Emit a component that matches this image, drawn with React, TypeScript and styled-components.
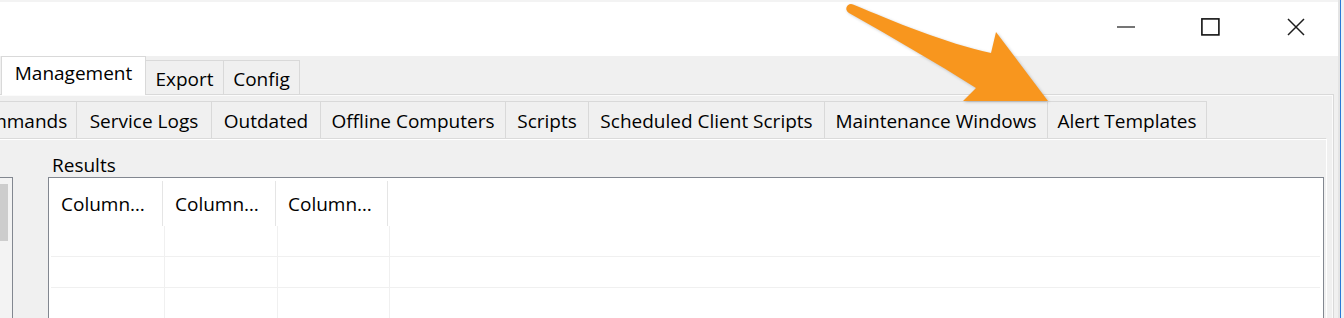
import React from 'react';
import styled, { createGlobalStyle } from 'styled-components';

const GlobalStyle = createGlobalStyle`
  html, body {
    margin: 0;
    padding: 0;
    background: #ffffff;
    overflow: hidden;
  }
  body {
    font-family: "Open Sans", "Noto Sans", "Liberation Sans", sans-serif;
    font-size: 19px;
    color: #000;
  }
`;

const topTabs = [
  { label: 'Management', width: 145, selected: true },
  { label: 'Export', width: 79 },
  { label: 'Config', width: 77 },
];

const subTabs = [
  { label: 'Commands', width: 120 },
  { label: 'Service Logs', width: 135 },
  { label: 'Outdated', width: 109 },
  { label: 'Offline Computers', width: 185 },
  { label: 'Scripts', width: 83 },
  { label: 'Scheduled Client Scripts', width: 236 },
  { label: 'Maintenance Windows', width: 223 },
  { label: 'Alert Templates', width: 160 },
];

const columns = [114, 113, 112];
const rows = [0, 1, 2];

const App = () => {
  return (
    <>
      <GlobalStyle />
      <Screen>
        <Window>
          <TitleBar>
            <CaptionButton aria-label="Minimize">
              <svg width="18" height="2" viewBox="0 0 18 2">
                <line x1="0" y1="1" x2="18" y2="1" stroke="#2b2b2b" strokeWidth="1.3" />
              </svg>
            </CaptionButton>
            <CaptionButton aria-label="Maximize">
              <svg width="19" height="18" viewBox="0 0 19 18">
                <rect x="0.9" y="0.9" width="17" height="16" fill="none" stroke="#111" strokeWidth="1.6" />
              </svg>
            </CaptionButton>
            <CaptionButton aria-label="Close">
              <svg width="18" height="18" viewBox="0 0 18 18">
                <path d="M1 1 L17 17 M17 1 L1 17" stroke="#1d1d1d" strokeWidth="1.5" />
              </svg>
            </CaptionButton>
          </TitleBar>

          <Body>
            <TopTabStrip>
              {topTabs.map((t) => (
                <TopTab key={t.label} $w={t.width} $selected={!!t.selected}>
                  {t.label}
                </TopTab>
              ))}
            </TopTabStrip>

            <OuterPanel>
              <SubTabStrip>
                {subTabs.map((t) => (
                  <SubTab key={t.label} $w={t.width}>
                    {t.label}
                  </SubTab>
                ))}
              </SubTabStrip>

              <InnerPanel>
                <Spacer />
                <GroupLabel>Results</GroupLabel>
                <LeftPane>
                  <ScrollThumb />
                </LeftPane>
                <ListBox>
                  <HeaderRow>
                    {columns.map((w, i) => (
                      <HeaderCell key={i} $w={w}>
                        Column…
                      </HeaderCell>
                    ))}
                  </HeaderRow>
                  <RowArea>
                    {rows.map((r) => (
                      <GridRow key={r}>
                        {columns.map((w, i) => (
                          <GridCell key={i} $w={w} />
                        ))}
                        <FillCell />
                      </GridRow>
                    ))}
                  </RowArea>
                </ListBox>
              </InnerPanel>
            </OuterPanel>
          </Body>
        </Window>
        <NextWindowEdge />

        <ArrowOverlay>
          <svg width="220" height="110" viewBox="840 0 220 110">
            <path
              d="M853 4.5 C895 22 945 43 991 53 L996 32 L1048 101 L963 101 L976 88 C935 62 893 38 849 13 A4.6 4.6 0 0 1 853 4.5 Z"
              fill="#f8961e"
            />
          </svg>
        </ArrowOverlay>
      </Screen>
    </>
  );
};

export default App;

const Screen = styled.div`
  position: relative;
  display: flex;
  width: 1344px;
  height: 318px;
  overflow: hidden;
`;

const Window = styled.div`
  width: 1338px;
  display: flex;
  flex-direction: column;
  flex-shrink: 0;
`;

const TitleBar = styled.div`
  height: 56px;
  flex-shrink: 0;
  box-sizing: border-box;
  border-top: 2px solid #f3f3f3;
  background: #ffffff;
  display: flex;
  justify-content: flex-end;
  align-items: flex-start;
`;

const CaptionButton = styled.div`
  width: 85px;
  height: 50px;
  display: flex;
  align-items: center;
  justify-content: center;
`;

const Body = styled.div`
  flex: 1 0 auto;
  background: #f0f0f0;
  display: flex;
  flex-direction: column;
`;

const TopTabStrip = styled.div`
  height: 38px;
  flex-shrink: 0;
  display: flex;
  align-items: flex-end;
  padding-left: 1px;
`;

const TopTab = styled.div<{ $w: number; $selected: boolean }>`
  position: relative;
  z-index: 1;
  box-sizing: border-box;
  width: ${(p) => p.$w}px;
  height: ${(p) => (p.$selected ? 39 : 34)}px;
  margin-bottom: ${(p) => (p.$selected ? -1 : 0)}px;
  margin-left: ${(p) => (p.$selected ? 0 : -1)}px;
  padding-top: ${(p) => (p.$selected ? 4 : 6)}px;
  background: ${(p) => (p.$selected ? '#ffffff' : '#f0f0f0')};
  border: 1px solid #d9d9d9;
  border-bottom: none;
  text-align: center;
  line-height: 25px;
  white-space: nowrap;
`;

const OuterPanel = styled.div`
  flex: 1 0 auto;
  margin-right: 4px;
  border-top: 1px solid #d9d9d9;
  border-right: 1px solid #d9d9d9;
  box-shadow: inset 0 1px 0 #fbfbfb, inset -1px 0 0 #fbfbfb;
  padding-top: 6px;
  display: flex;
  flex-direction: column;
`;

const SubTabStrip = styled.div`
  height: 37px;
  flex-shrink: 0;
  display: flex;
  margin-left: -44px;
`;

const SubTab = styled.div<{ $w: number }>`
  box-sizing: border-box;
  width: ${(p) => p.$w}px;
  flex-shrink: 0;
  height: 37px;
  padding-top: 7px;
  border-top: 1px solid #d9d9d9;
  border-left: 1px solid #d9d9d9;
  text-align: center;
  line-height: 25px;
  white-space: nowrap;

  &:last-child {
    border-right: 1px solid #d9d9d9;
  }
`;

const InnerPanel = styled.div`
  flex: 1 0 auto;
  margin-right: 6px;
  border-top: 1px solid #dadada;
  border-right: 1px solid #ffffff;
  box-shadow: inset 0 1px 0 #ffffff;
  padding: 14px 2px 0 0;
  display: grid;
  grid-template-columns: 13px 1fr;
  grid-template-rows: 24px 1fr;
  column-gap: 35px;
`;

const Spacer = styled.div``;

const GroupLabel = styled.div`
  padding-left: 4px;
  line-height: 25px;
  margin-top: 0;
  white-space: nowrap;
`;

const LeftPane = styled.div`
  background: #f3f3f3;
  border-top: 1px solid #828790;
  border-right: 1px solid #828790;
  padding-top: 6px;
`;

const ScrollThumb = styled.div`
  width: 8px;
  height: 57px;
  background: #cdcdcd;
`;

const ListBox = styled.div`
  background: #ffffff;
  border: 1px solid #828790;
  border-bottom: none;
  display: flex;
  flex-direction: column;
`;

const HeaderRow = styled.div`
  height: 48px;
  flex-shrink: 0;
  display: flex;
`;

const HeaderCell = styled.div<{ $w: number }>`
  box-sizing: border-box;
  width: ${(p) => p.$w}px;
  height: 45px;
  margin-top: 3px;
  padding: 11px 0 0 12px;
  border-right: 1px solid #e5e5e5;
  line-height: 25px;
  white-space: nowrap;
`;

const RowArea = styled.div`
  padding: 0 3px 0 2px;
`;

const GridRow = styled.div`
  height: 31px;
  box-sizing: border-box;
  border-bottom: 1px solid #f0f0f0;
  display: flex;
`;

const GridCell = styled.div<{ $w: number }>`
  box-sizing: border-box;
  width: ${(p) => p.$w}px;
  border-right: 1px solid #f0f0f0;
`;

const FillCell = styled.div`
  flex: 1;
`;

const NextWindowEdge = styled.div`
  flex: 1;
  background: linear-gradient(
    to right,
    #e4e4e4 0 2px,
    #2a78d6 2px 3px,
    #eef1f5 3px
  );
`;

const ArrowOverlay = styled.div`
  position: absolute;
  left: 840px;
  top: 0;
  width: 220px;
  height: 110px;
  pointer-events: none;
  filter: drop-shadow(1px 1.5px 1.5px rgba(0, 0, 0, 0.22));
`;
